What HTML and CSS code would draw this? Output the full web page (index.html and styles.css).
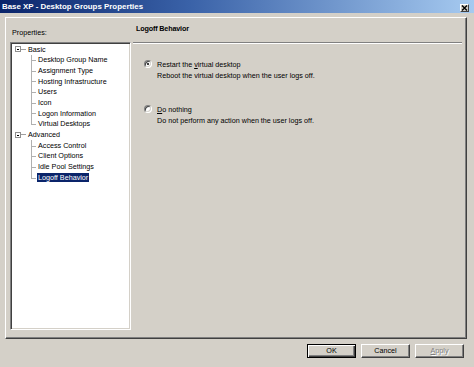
FILE: index.html
```html
<!DOCTYPE html>
<html>
<head>
<meta charset="utf-8">
<title>Base XP - Desktop Groups Properties</title>
<link rel="stylesheet" href="styles.css">
</head>
<body>
<div class="window">
  <div class="titlebar">
    <span class="title">Base XP - Desktop Groups Properties</span>
    <span class="close"><svg width="7" height="6" viewBox="0 0 7 6"><path d="M1 0.5 L6 5.5 M6 0.5 L1 5.5" stroke="#000" stroke-width="1.4"/></svg></span>
  </div>
  <div class="panel">
    <div class="left">
      <div class="props-label">Properties:</div>
      <div class="tree">
        <div class="node root"><span class="expander"></span><span class="conn"></span><span class="lbl">Basic</span></div>
        <div class="group">
          <div class="node child"><span class="lbl">Desktop Group Name</span></div>
          <div class="node child"><span class="lbl">Assignment Type</span></div>
          <div class="node child"><span class="lbl">Hosting Infrastructure</span></div>
          <div class="node child"><span class="lbl">Users</span></div>
          <div class="node child"><span class="lbl">Icon</span></div>
          <div class="node child"><span class="lbl">Logon Information</span></div>
          <div class="node child last"><span class="lbl">Virtual Desktops</span></div>
        </div>
        <div class="node root"><span class="expander"></span><span class="conn"></span><span class="lbl">Advanced</span></div>
        <div class="group">
          <div class="node child"><span class="lbl">Access Control</span></div>
          <div class="node child"><span class="lbl">Client Options</span></div>
          <div class="node child"><span class="lbl">Idle Pool Settings</span></div>
          <div class="node child last"><span class="lbl selected">Logoff Behavior</span></div>
        </div>
      </div>
    </div>
    <div class="right">
      <div class="header">Logoff Behavior</div>
      <div class="sep"></div>
      <div class="option first">
        <div class="opt-row"><span class="radio checked"></span><span>Restart the <u>v</u>irtual desktop</span></div>
        <div class="desc">Reboot the virtual desktop when the user logs off.</div>
      </div>
      <div class="option">
        <div class="opt-row"><span class="radio"></span><span><u>D</u>o nothing</span></div>
        <div class="desc">Do not perform any action when the user logs off.</div>
      </div>
    </div>
  </div>
  <div class="buttons">
    <button class="btn default">OK</button>
    <button class="btn">Cancel</button>
    <button class="btn disabled"><u>A</u>pply</button>
  </div>
</div>
</body>
</html>
```

FILE: styles.css
```css
* { box-sizing: border-box; }
html, body {
  margin: 0;
  padding: 0;
  width: 474px;
  height: 367px;
  overflow: hidden;
  background: #d4d0c8;
}
.window {
  width: 474px;
  height: 367px;
  background: #d4d0c8;
  font-family: "Liberation Sans", Arial, sans-serif;
  font-size: 7.2px;
  color: #000;
}
.titlebar {
  height: 13px;
  background: linear-gradient(to right, #0a246a 0%, #3a62a8 40%, #a6caf0 100%);
  display: flex;
  align-items: center;
  justify-content: space-between;
  padding-left: 2px;
  padding-right: 5px;
}
.title {
  color: #fff;
  font-weight: bold;
  font-size: 7.9px;
  line-height: 13px;
  white-space: nowrap;
}
.close {
  width: 9px;
  height: 8px;
  margin-top: 2px;
  background: #d4d0c8;
  border: 1px solid;
  border-color: #fff #404040 #404040 #fff;
  display: flex;
  align-items: center;
  justify-content: center;
}
.close svg { display: block; }
.panel {
  margin: 4px 0 0 5px;
  width: 462px;
  height: 322px;
  border: 1px solid;
  border-color: #fff #404040 #404040 #fff;
  box-shadow: inset -1px -1px #808080;
  display: flex;
}
.left {
  width: 125px;
  padding-left: 4px;
  flex: none;
}
.props-label {
  margin-top: 10px;
  padding-left: 2px;
  line-height: 10px;
  height: 10px;
  white-space: nowrap;
}
.tree {
  margin-top: 4px;
  width: 121px;
  height: 288px;
  background: #fff;
  border: 1px solid;
  border-color: #808080 #fff #fff #808080;
  box-shadow: inset 1px 1px #404040, inset -1px -1px #d4d0c8;
  padding: 1px 0 0 1px;
}
.node {
  height: 10.7px;
  line-height: 10.7px;
  white-space: nowrap;
  display: flex;
  align-items: center;
  position: relative;
}
.root { padding-left: 3px; }
.expander {
  width: 6px;
  height: 6px;
  border: 1px solid #909090;
  background: #fff;
  position: relative;
  flex: none;
}
.expander::after {
  content: "";
  position: absolute;
  left: 1px;
  top: 2px;
  width: 2px;
  height: 1px;
  background: #000;
}
.conn {
  width: 5px;
  border-top: 1px solid #a0a0a0;
  margin-right: 1px;
  flex: none;
}
.child { padding-left: 25px; }
.child::before {
  content: "";
  position: absolute;
  left: 19px;
  top: 0;
  bottom: 0;
  border-left: 1px solid #b0b0b0;
}
.child.last::before { bottom: 50%; }
.child::after {
  content: "";
  position: absolute;
  left: 19px;
  top: 50%;
  width: 5px;
  border-top: 1px solid #b0b0b0;
}
.lbl {
  display: inline-block;
  padding: 0 1px;
  height: 9.5px;
  line-height: 9.5px;
}
.lbl.selected {
  background: #0a246a;
  color: #fff;
}
.right {
  flex: 1;
  min-width: 0;
}
.header {
  margin-top: 6px;
  padding-left: 5px;
  font-weight: bold;
  line-height: 10px;
  height: 10px;
  letter-spacing: -0.15px;
  white-space: nowrap;
}
.sep {
  margin: 8px 4px 0 2px;
  height: 2px;
  border-top: 1px solid #808080;
  border-bottom: 1px solid #fff;
}
.option {
  margin-top: 23px;
  padding-left: 13px;
}
.option.first { margin-top: 14.5px; }
.opt-row {
  display: flex;
  align-items: center;
  height: 11px;
  line-height: 11px;
  white-space: nowrap;
}
.radio {
  width: 8px;
  height: 8px;
  border-radius: 50%;
  border: 1px solid;
  border-color: #808080 #fff #fff #808080;
  background: #fff;
  box-shadow: inset 1px 1px #404040, inset -1px -1px #d4d0c8;
  margin-right: 5px;
  flex: none;
  position: relative;
}
.radio.checked::after {
  content: "";
  position: absolute;
  left: 2px;
  top: 2px;
  width: 2px;
  height: 2px;
  border-radius: 50%;
  background: #000;
}
.desc {
  padding-left: 13px;
  height: 11px;
  line-height: 11px;
  white-space: nowrap;
}
.buttons {
  display: flex;
  justify-content: flex-end;
  gap: 5px;
  margin-top: 5px;
  padding-right: 10px;
}
.btn {
  width: 49px;
  height: 14px;
  padding: 0;
  margin: 0;
  font-family: "Liberation Sans", Arial, sans-serif;
  font-size: 7.2px;
  color: #000;
  background: #d4d0c8;
  border: 1px solid;
  border-color: #fff #404040 #404040 #fff;
  box-shadow: inset -1px -1px #808080;
  line-height: 12px;
  text-align: center;
}
.btn.default {
  border: 1px solid #000;
  box-shadow: inset 1px 1px #fff, inset -1px -1px #404040, inset -2px -2px #808080;
}
.btn.disabled {
  color: #808080;
  text-shadow: 1px 1px #fff;
}
u { text-decoration: underline; }
```
